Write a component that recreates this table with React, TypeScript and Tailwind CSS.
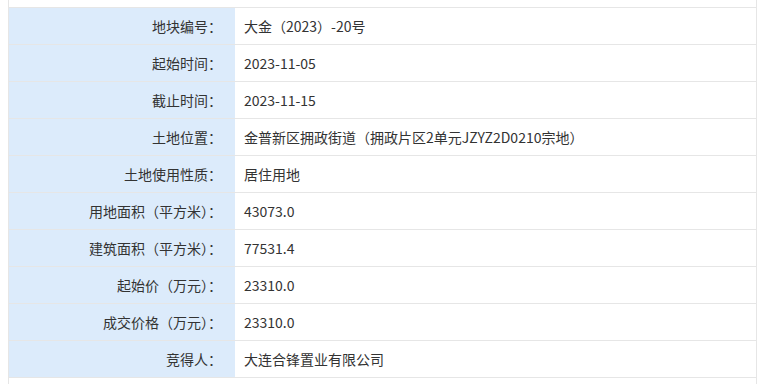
import React from 'react';

const rows: [string, string][] = [
  ['地块编号：', '大金（2023）-20号'],
  ['起始时间：', '2023-11-05'],
  ['截止时间：', '2023-11-15'],
  ['土地位置：', '金普新区拥政街道（拥政片区2单元JZYZ2D0210宗地）'],
  ['土地使用性质：', '居住用地'],
  ['用地面积（平方米）：', '43073.0'],
  ['建筑面积（平方米）：', '77531.4'],
  ['起始价（万元）：', '23310.0'],
  ['成交价格（万元）：', '23310.0'],
  ['竞得人：', '大连合锋置业有限公司'],
];

const App: React.FC = () => {
  return (
    <div
      className="w-[766px] h-[384px] bg-white overflow-hidden text-[14px] text-[#333]"
      style={{ fontFamily: '"Noto Sans CJK SC", "Liberation Sans", sans-serif' }}
    >
      <div className="ml-[8px] w-[749px] h-full border-x border-[#e6e6e6] pt-[7px]">
        {/* Detail table */}
        <div className="border-b border-[#e6e6e6]">
          {rows.map(([label, value], i) => (
            <div key={i} className="grid grid-cols-[226px_1fr] h-[37px] border-t border-[#e6e6e6]">
              <div className="bg-[#dcebfb] flex items-center justify-end pr-[13px]">{label}</div>
              <div className="flex items-center pl-[9px]">{value}</div>
            </div>
          ))}
        </div>
      </div>
    </div>
  );
};

export default App;
